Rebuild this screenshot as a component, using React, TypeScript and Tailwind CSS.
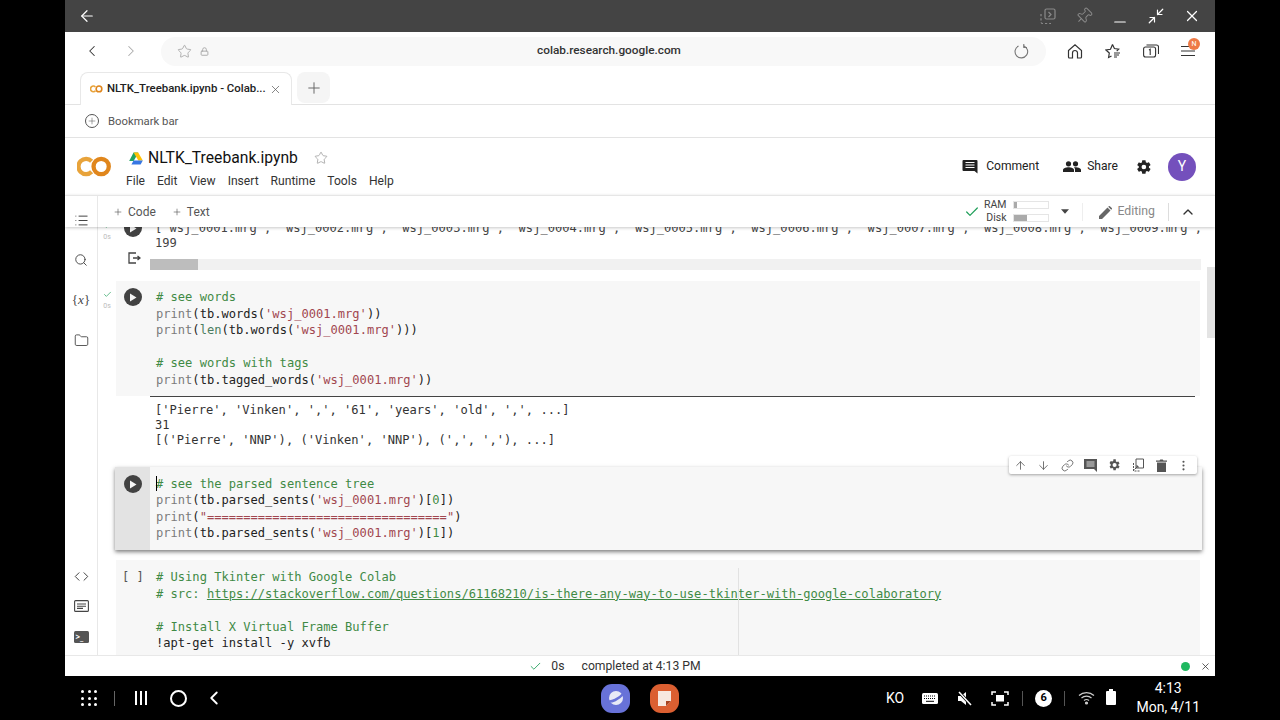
import { ArrowDown, ArrowLeft, ArrowUp, Check, ChevronLeft, ChevronRight, ChevronUp, Code, Folder, Link, List, Lock, Minimize2, Minus, MoreVertical, Pin, Plus, Search, Star, X } from "lucide-react";

const MONO = "font-['DejaVu_Sans_Mono',monospace]";

function PlayButton() {
  return (
    <div className="flex h-[18px] w-[18px] items-center justify-center rounded-full bg-[#424242]">
      <svg width="8" height="9" viewBox="0 0 8 9"><path d="M1 0.5 L7.5 4.5 L1 8.5 Z" fill="#f5f5f5" /></svg>
    </div>
  );
}

function Print({ children }: { children: React.ReactNode }) {
  return <div className="h-[16.5px] whitespace-pre"><span className="text-[#7b7b7b]">print</span>{children}</div>;
}

function Str({ children }: { children: React.ReactNode }) {
  return <span className="text-[#a1464f]">{children}</span>;
}

function Comment({ children }: { children: React.ReactNode }) {
  return <div className="h-[16.5px] whitespace-pre text-[#3f8a45]">{children}</div>;
}

function ColabLogo({ size = 36 }: { size?: number }) {
  return (
    <svg width={size} height={size * 0.6} viewBox="0 0 36 22" fill="none">
      <path d="M15 5.5 A8 8 0 1 0 15 16.5" stroke="#e8a33a" strokeWidth="4.5" />
      <circle cx="25" cy="11" r="8" stroke="#e0861c" strokeWidth="4.5" />
    </svg>
  );
}

function DriveLogo() {
  return (
    <svg width="14" height="13" viewBox="0 0 14 13">
      <path d="M4.6 0.5 H9.2 L7 5 4.6 9 2.4 9 0.2 9 Z" fill="#1fa463" />
      <path d="M4.6 0.5 H9.2 L13.8 8.5 H9.3 Z" fill="#ffc107" />
      <path d="M2.4 12.5 L4.6 8.5 H13.8 L11.6 12.5 Z" fill="#3777e3" />
    </svg>
  );
}

function BrowserChrome() {
  return (
    <>
      <div className="flex h-[32px] items-center justify-between bg-[#444444] pl-[13px] pr-[14px] text-white">
        <ArrowLeft size={18} strokeWidth={1.6} />
        <div className="flex items-center gap-[18px]">
          <svg width="18" height="18" viewBox="0 0 18 18" fill="none" stroke="#8a8a8a" strokeWidth="1.2">
            <rect x="6" y="2" width="10" height="10" rx="1.5" />
            <path d="M2 7v8a1.5 1.5 0 0 0 1.5 1.5H12" strokeDasharray="2.2 2" />
            <path d="M9.5 5l2.5 2.5L9.5 10" />
          </svg>
          <Pin size={18} strokeWidth={1.3} className="rotate-45 text-[#8a8a8a]" />
          <Minus size={18} strokeWidth={1.6} className="translate-y-[6px]" />
          <Minimize2 size={18} strokeWidth={1.6} />
          <X size={18} strokeWidth={1.6} />
        </div>
      </div>
      <div className="flex h-[38px] items-center bg-white pl-[18px] pr-[20px]">
        <ChevronLeft size={18} strokeWidth={1.4} className="text-[#333]" />
        <ChevronRight size={18} strokeWidth={1.4} className="ml-[21px] text-[#aaa]" />
        <div className="ml-[21px] flex h-[29px] w-[885px] items-center rounded-full bg-[#f8f8f8] px-[16px]">
          <Star size={15} strokeWidth={1.2} className="text-[#999]" />
          <Lock size={9} strokeWidth={2.5} className="ml-[8px] text-[#aaa]" />
          <span className="flex-1 pr-[5px] text-center font-['Roboto',sans-serif] text-[11.8px] font-medium text-[#333]">colab.research.google.com</span>
          <svg className="mr-[1px]" width="15" height="15" viewBox="0 0 15 15" fill="none" stroke="#777" strokeWidth="1.1"><path d="M9.500 1.700A6.300 6.300 0 1 1 4.500 2" /><path d="M9.800 0v3.500H13" /></svg>
        </div>
        <div className="ml-auto flex items-center gap-[22px] text-[#333]">
          <svg width="16" height="16" viewBox="0 0 16 16" fill="none" stroke="#333" strokeWidth="1.2"><path d="M1.5 7.5 8 1.8l6.5 5.7V14a1 1 0 0 1-1 1H10.5V10a2.5 2.5 0 0 0-5 0v5h-3a1 1 0 0 1-1-1Z" /></svg>
          <svg width="16" height="16" viewBox="0 0 16 16" fill="none" stroke="#333" strokeWidth="1.2"><path d="M7.500 1.500l1.900 4 4.300.6-2 2M6.500 13l-2.900 1.500.7-4.500-3.300-3 4.500-.7L7.500 1.500M9 10h6M9 12h5M9 14h3" /></svg>
          <svg width="16" height="14" viewBox="0 0 16 14" fill="none" stroke="#333" strokeWidth="1.1"><rect x="0.6" y="3" width="12" height="10" rx="2" /><path d="M3.5 1h10a2 2 0 0 1 2 2v7" /><path d="M6 6l1.2-.8V11" /></svg>
          <div className="relative">
            <svg width="14" height="12" viewBox="0 0 14 12" stroke="#333" strokeWidth="1.1"><path d="M0 1.5h14M0 6h14M0 10.5h14" /></svg>
            <div className="absolute -right-[5px] -top-[7px] flex h-[12px] w-[12px] items-center justify-center rounded-full bg-[#ee7a45] font-['Roboto',sans-serif] text-[7px] text-white">N</div>
          </div>
        </div>
      </div>
      <div className="flex h-[35px] items-end border-b border-[#e3e3e3] bg-white pl-[15px]">
        <div className="relative z-10 -mb-px flex h-[33px] w-[212px] items-center rounded-t-[8px] border border-b-0 border-[#e8e8e8] bg-white pl-[9px] pr-[9px]">
          <ColabLogo size={13} />
          <span className="ml-[4px] whitespace-nowrap font-['Roboto',sans-serif] text-[11.4px] font-medium text-[#222]">NLTK_Treebank.ipynb - Colab...</span>
          <X size={13} strokeWidth={1.3} className="ml-auto text-[#555]" />
        </div>
        <div className="mb-[1px] ml-[5px] flex h-[31px] w-[33px] items-center justify-center rounded-[8px] bg-[#f5f5f5]">
          <Plus size={18} strokeWidth={1.3} className="text-[#666]" />
        </div>
      </div>
      <div className="flex h-[33px] items-center gap-[9px] border-b border-[#e3e3e3] bg-white pl-[20px]">
        <div className="flex h-[14px] w-[14px] items-center justify-center rounded-full border border-[#555]">
          <Plus size={10} strokeWidth={1.3} className="text-[#555]" />
        </div>
        <span className="pt-[3px] font-['Roboto',sans-serif] text-[11.3px] text-[#555]">Bookmark bar</span>
      </div>
    </>
  );
}

function ColabHeader() {
  return (
    <div className="flex h-[57px] items-center bg-white pl-[12px] pr-[19px] font-['Roboto',sans-serif]">
      <ColabLogo size={35} />
      <div className="ml-[17px] mt-[4px]">
        <div className="flex items-center gap-[5px]">
          <DriveLogo />
          <span className="text-[15.7px] leading-[22px] text-[#111]">NLTK_Treebank.ipynb</span>
          <Star size={14} strokeWidth={1.3} className="ml-[11px] text-[#999]" />
        </div>
        <div className="mt-[3px] flex gap-[12px] text-[12.1px] leading-[18px] text-[#333]">
          <span className="-ml-[3px]">File</span><span>Edit</span><span>View</span><span>Insert</span><span>Runtime</span><span>Tools</span><span>Help</span>
        </div>
      </div>
      <div className="ml-auto flex items-center text-[12.1px] text-[#222]">
        <svg width="16" height="16" viewBox="0 0 16 16" fill="#222"><path d="M1.5 1h13a1 1 0 0 1 1 1v12.5L12.5 12h-11a1 1 0 0 1-1-1V2a1 1 0 0 1 1-1Z" /><path d="M3.5 3.5h9M3.5 6h9M3.5 8.5h9" stroke="#fff" strokeWidth="1" /></svg>
        <span className="ml-[8px]">Comment</span>
        <svg className="ml-[24px]" width="18" height="11" viewBox="0 0 18 11" fill="#222"><circle cx="5.5" cy="2.8" r="2.6" /><circle cx="12.5" cy="2.8" r="2.6" /><path d="M0 11V8.8C0 7 3.5 6.2 5.5 6.2S11 7 11 8.8V11Z" /><path d="M12 11V8.5c0-.9-.4-1.6-1.1-2.2.5-.1 1.1-.1 1.6-.1 2 0 5.500.8 5.500 2.600V11Z" /></svg>
        <span className="ml-[6px]">Share</span>
        <svg className="ml-[18px]" width="16" height="16" viewBox="0 0 24 24" fill="#222"><path d="M19.4 13c.04-.32.06-.65.06-1s-.02-.68-.07-1l2.160-1.630c.19-.15.24-.42.12-.64l-2.050-3.550c-.12-.22-.39-.3-.61-.22l-2.550 1.020c-.53-.4-1.100-.74-1.730-1l-.38-2.710A.5.5 0 0 0 13.850 2h-4.100a.5.5 0 0 0-.5.42l-.38 2.710c-.63.26-1.200.6-1.730 1L4.590 5.110a.5.5 0 0 0-.61.22L1.930 8.880c-.13.22-.07.49.12.64L4.210 11c-.05.32-.09.66-.09 1s.02.68.07 1l-2.160 1.630a.5.5 0 0 0-.12.64l2.050 3.550c.12.22.39.3.61.22l2.550-1.020c.53.4 1.100.74 1.730 1l.38 2.710c.05.24.26.42.5.42h4.100c.24 0 .45-.18.49-.42l.38-2.710c.63-.26 1.200-.6 1.730-1l2.550 1.020c.23.09.49 0 .61-.22l2.050-3.550a.5.5 0 0 0-.12-.64ZM11.800 15.500a3.500 3.500 0 1 1 0-7 3.500 3.500 0 0 1 0 7Z" /></svg>
        <div className="ml-[16px] flex h-[28px] w-[28px] items-center justify-center rounded-full bg-[#7450bc] text-[14px] text-white">Y</div>
      </div>
    </div>
  );
}

function ColabToolbar() {
  return (
    <div className="relative z-10 flex h-[32px] items-center border-t border-[#e6e6e6] bg-white font-['Roboto',sans-serif] shadow-[0_1px_3px_rgba(0,0,0,0.22)]">
      <div className="h-full w-[33px] border-r border-[#e8e8e8]" />
      <div className="ml-[15px] flex items-center gap-[5px] text-[12px] text-[#555]"><Plus size={10} strokeWidth={1.5} /><span>Code</span></div>
      <div className="ml-[16px] flex items-center gap-[5px] text-[12px] text-[#555]"><Plus size={10} strokeWidth={1.5} /><span>Text</span></div>
      <div className="ml-auto flex items-center pr-[19px]">
        <Check size={16} strokeWidth={1.8} className="text-[#1e9e58]" />
        <div className="ml-[4px] mr-[7px] text-right text-[10.5px] leading-[12.5px] text-[#444]"><div>RAM</div><div>Disk</div></div>
        <div className="flex flex-col gap-[5px]">
          <div className="h-[8px] w-[36px] border border-[#e5e5e5]"><div className="h-full w-[3px] bg-[#aaa]" /></div>
          <div className="h-[8px] w-[36px] border border-[#e5e5e5]"><div className="h-full w-[13px] bg-[#aaa]" /></div>
        </div>
        <svg className="ml-[12px]" width="8" height="5" viewBox="0 0 9 5" fill="#444"><path d="M0 0h9L4.500 5Z" /></svg>
        <div className="ml-[13px] h-[18px] border-l border-[#eee]" />
        <svg className="ml-[16px]" width="14" height="14" viewBox="0 0 14 14" fill="#666"><path d="M0 11v3h3l8.500-8.500-3-3ZM12.800 4.200a.8.8 0 0 0 0-1.100l-1.900-1.900a.8.8 0 0 0-1.100 0L9.200 1.800l3 3Z" /></svg>
        <span className="ml-[4px] text-[12.3px] text-[#888]">Editing</span>
        <div className="ml-[13px] h-[18px] border-l border-[#ddd]" />
        <ChevronUp size={16} strokeWidth={2} className="ml-[11px] text-[#333]" />
      </div>
    </div>
  );
}

function Sidebar() {
  return (
    <div className="flex w-[33px] shrink-0 flex-col items-center border-r border-[#e8e8e8] bg-white text-[#444]">
      <List size={15} strokeWidth={1.6} className="relative z-20 mt-[-14px]" />
      <Search size={14} strokeWidth={1.6} className="mt-[25px]" />
      <span className="mt-[25px] h-[16px] font-['Liberation_Serif',serif] text-[13px] leading-[16px]">{"{"}<i>x</i>{"}"}</span>
      <Folder size={15} strokeWidth={1.4} className="mt-[25px]" />
      <Code size={15} strokeWidth={1.6} className="mt-auto" />
      <svg className="mt-[16px]" width="15" height="12" viewBox="0 0 15 12" fill="none" stroke="#444" strokeWidth="1.100"><rect x="0.600" y="0.600" width="13.800" height="10.800" rx="1" /><path d="M3 4h9M3 6.200h9M3 8.400h6" /></svg>
      <div className="mb-[12px] mt-[19px] flex h-[12px] w-[15px] items-center rounded-[1.500px] bg-[#555] pl-[2px] text-[8px] font-bold leading-none text-white">&gt;_</div>
    </div>
  );
}

function CellToolbar() {
  return (
    <div className="absolute -top-[11px] right-[5px] flex h-[18px] w-[188px] items-center justify-between rounded-[2px] bg-white pl-[5px] pr-[7px] text-[#555] shadow-[0_1px_3px_rgba(0,0,0,0.35)]">
      <ArrowUp size={13} strokeWidth={1.5} />
      <ArrowDown size={13} strokeWidth={1.5} />
      <Link size={13} strokeWidth={1.5} />
      <svg width="13" height="13" viewBox="0 0 13 13" fill="#555"><path d="M0 0h13v13l-3-3H0Z" /><path d="M2.500 3h8M2.500 5h8M2.500 7h8" stroke="#fff" strokeWidth="0.800" /></svg>
      <svg width="14" height="14" viewBox="0 0 24 24" fill="#555"><path d="M19.400 13a7.500 7.500 0 0 0 0-2l2.100-1.600-2-3.500-2.500 1a7.500 7.500 0 0 0-1.700-1L15 2.100h-4L10.600 5a7.500 7.500 0 0 0-1.700 1l-2.500-1-2 3.500L6.500 11a7.500 7.500 0 0 0 0 2l-2.100 1.600 2 3.500 2.500-1c.5.4 1.100.7 1.700 1l.4 2.800h4l.4-2.800c.6-.3 1.200-.6 1.700-1l2.500 1 2-3.500ZM13 15.500a3.500 3.500 0 1 1 0-7 3.500 3.500 0 0 1 0 7Z" /></svg>
      <svg width="14" height="14" viewBox="0 0 14 14" fill="none" stroke="#555" strokeWidth="1"><path d="M5 1h7.500v9H5Z" /><path d="M2.500 5v8H9" strokeDasharray="2 1" /><path d="M3.500 11.500 7 8M5 8h2v2" /></svg>
      <svg width="11" height="13" viewBox="0 0 11 13" fill="#555"><path d="M1 3.500h9V13H1ZM0 1.500h3.500L4.300.500h2.400l.8 1H11v1.200H0Z" /></svg>
      <MoreVertical size={13} strokeWidth={2} />
    </div>
  );
}

function RunStatus({ className }: { className: string }) {
  return (
    <div className={`absolute left-[1px] flex w-[16px] flex-col items-center gap-[3px] font-['Roboto',sans-serif] text-[7px] leading-[8px] text-[#bbb] ${className}`}>
      <Check size={9} strokeWidth={1.800} className="text-[#1e9e58]" />
      <span>0s</span>
    </div>
  );
}

function Notebook() {
  return (
    <div className={`relative flex-1 overflow-hidden bg-white ${MONO} text-[12.08px] leading-[16.5px] text-[#222]`}>
      <RunStatus className="-top-[6px]" />
      {/* first output, scrolled under the toolbar */}
      <div className="relative -mt-[7px] h-[32px] overflow-hidden pl-[25px]">
        <div className="absolute -top-[1px] left-[26px]"><PlayButton /></div>
        <div className="ml-[32px] whitespace-pre text-[#444]">
          <div className="h-[15px]">{"['wsj_0001.mrg', 'wsj_0002.mrg', 'wsj_0003.mrg', 'wsj_0004.mrg', 'wsj_0005.mrg', 'wsj_0006.mrg', 'wsj_0007.mrg', 'wsj_0008.mrg', 'wsj_0009.mrg',"}</div>
          <div className="h-[15px]">199</div>
        </div>
      </div>
      <div className="flex h-[16px] items-start pl-[30px] pr-[14px]">
        <svg width="13" height="12" viewBox="0 0 13 12" fill="none" stroke="#444" strokeWidth="1.300"><path d="M8 1H1v10h7M5 6h6.500M9.500 4l2.500 2-2.500 2" /></svg>
        <div className="ml-[9px] mt-[7px] h-[11px] flex-1 bg-[#f1f1f1]"><div className="h-full w-[48px] bg-[#bdbdbd]" /></div>
      </div>

      {/* see words */}
      <div className="relative ml-[18px] mr-[15px] mt-[13px] h-[115px] bg-[#f7f7f7] pl-[40px] pt-[8px]">
        <div className="absolute left-[8px] top-[7px]"><PlayButton /></div>
        <Comment># see words</Comment>
        <Print>(tb.words(<Str>'wsj_0001.mrg'</Str>))</Print>
        <Print>(<span className="text-[#4b7d60]">len</span>(tb.words(<Str>'wsj_0001.mrg'</Str>)))</Print>
        <div className="h-[16.5px]" />
        <Comment># see words with tags</Comment>
        <Print>(tb.tagged_words(<Str>'wsj_0001.mrg'</Str>))</Print>
      </div>
      <RunStatus className="top-[63px]" />
      <div className="ml-[52px] mr-[20px] border-t border-[#444] pl-[5px] pt-[5px] text-[#333]">
        <div className="h-[15px] whitespace-pre">{"['Pierre', 'Vinken', ',', '61', 'years', 'old', ',', ...]"}</div>
        <div className="h-[15px]">31</div>
        <div className="h-[15px] whitespace-pre">{"[('Pierre', 'NNP'), ('Vinken', 'NNP'), (',', ','), ...]"}</div>
      </div>

      {/* selected cell */}
      <div className="relative ml-[17px] mr-[13px] mt-[20px] flex h-[83px] bg-[#f7f7f7] shadow-[0_2px_4px_rgba(0,0,0,0.5)]">
        <CellToolbar />
        <div className="w-[35px] shrink-0 bg-[#e3e3e3] pl-[9px] pt-[8px]"><PlayButton /></div>
        <div className="relative pl-[6px] pt-[8.5px]">
          <div className="absolute left-[6px] top-[9px] h-[15px] w-px bg-black" />
          <Comment># see the parsed sentence tree</Comment>
          <Print>(tb.parsed_sents(<Str>'wsj_0001.mrg'</Str>)[<span className="text-[#3f8a45]">0</span>])</Print>
          <Print>(<Str>"================================="</Str>)</Print>
          <Print>(tb.parsed_sents(<Str>'wsj_0001.mrg'</Str>)[<span className="text-[#3f8a45]">1</span>])</Print>
        </div>
      </div>

      {/* tkinter cell */}
      <div className="relative ml-[18px] mr-[15px] mt-[10px] h-[110px] bg-[#f7f7f7] pl-[40px] pt-[9px]">
        <div className="absolute left-[6px] top-[9px] text-[#555]">[ ]</div>
        <div className="absolute bottom-0 left-[622px] top-[8px] w-px bg-[#e2e2e2]" />
        <Comment># Using Tkinter with Google Colab</Comment>
        <Comment># src: <span className="underline">https://stackoverflow.com/questions/61168210/is-there-any-way-to-use-tkinter-with-google-colaboratory</span></Comment>
        <div className="h-[16.5px]" />
        <Comment># Install X Virtual Frame Buffer</Comment>
        <div className="h-[16.5px]">!apt-get install -y xvfb</div>
      </div>

      <div className="absolute right-0 top-[40px] h-[71px] w-[8px] bg-[#e4e4e4]" />
    </div>
  );
}

function StatusBar() {
  return (
    <div className="relative flex h-[21px] items-center justify-center border-t border-[#e8e8e8] bg-white pr-[50px] font-['Roboto',sans-serif] text-[12.2px] text-[#333]">
      <Check size={13} strokeWidth={1.600} className="text-[#1e9e58]" />
      <span className="ml-[9px]">0s</span>
      <span className="ml-[17px]">completed at 4:13 PM</span>
      <div className="absolute right-[25px] h-[9px] w-[9px] rounded-full bg-[#1fb860]" />
      <X size={11} strokeWidth={1.700} className="absolute right-[4px] text-[#333]" />
    </div>
  );
}

function Taskbar() {
  return (
    <div className="flex h-[44px] items-center bg-black pl-[81px] pr-[80px] font-['Roboto',sans-serif] text-white">
      <div className="grid grid-cols-3 gap-[3.500px]">
        {[0, 1, 2, 3, 4, 5, 6, 7, 8].map((i) => <div key={i} className="h-[3px] w-[3px] rounded-full bg-white" />)}
      </div>
      <div className="ml-[17px] h-[15px] w-px bg-[#666]" />
      <div className="ml-[20px] flex gap-[3px]">
        <div className="h-[14px] w-[2px] bg-white" /><div className="h-[14px] w-[2px] bg-white" /><div className="h-[14px] w-[2px] bg-white" />
      </div>
      <div className="ml-[23px] h-[17px] w-[17px] rounded-full border-2 border-white" />
      <ChevronLeft size={22} strokeWidth={2} className="ml-[16px]" />
      <div className="ml-[376px] flex h-[29px] w-[29px] items-center justify-center rounded-[11px] bg-[#6872d8]">
        <svg width="19" height="19" viewBox="0 0 19 19"><circle cx="10" cy="9" r="7" fill="#e8eaf6" /><path d="M1 12c4 2 12-2 17-8" stroke="#6872d8" strokeWidth="2.500" fill="none" /></svg>
      </div>
      <div className="ml-[20px] flex h-[29px] w-[29px] items-center justify-center rounded-[11px] bg-[#db5f31]">
        <svg width="15" height="17" viewBox="0 0 15 17"><path d="M1 1h13v10l-5 5H1Z" fill="#f7e8df" /><path d="M9 16v-5h5Z" fill="#a8431f" /></svg>
      </div>
      <span className="ml-[207px] text-[14px]">KO</span>
      <svg className="ml-[18px]" width="16" height="11" viewBox="0 0 16 11"><rect width="16" height="11" rx="1.500" fill="#fff" /><path d="M2 3h12M2 5.500h12" stroke="#000" strokeWidth="1" strokeDasharray="1 1" /><path d="M4 8.300h8" stroke="#000" strokeWidth="1" /></svg>
      <svg className="ml-[19px]" width="16" height="15" viewBox="0 0 16 15"><path d="M1 5h3l5-4v13l-5-4H1Z" fill="#fff" /><path d="M2 1l12 13" stroke="#000" strokeWidth="3" /><path d="M2 1l12 13" stroke="#fff" strokeWidth="1.500" /></svg>
      <svg className="ml-[18px]" width="18" height="15" viewBox="0 0 18 15" fill="none" stroke="#fff" strokeWidth="1.500"><path d="M1 4V1h4M13 1h4v3M1 11v3h4M13 14h4v-3" /><rect x="5" y="4" width="8" height="6.500" fill="#fff" stroke="none" /></svg>
      <div className="ml-[13px] h-[15px] w-px bg-[#555]" />
      <div className="ml-[12px] flex h-[17px] w-[17px] items-center justify-center rounded-full bg-white text-[11px] font-bold text-black">6</div>
      <div className="ml-[12px] h-[15px] w-px bg-[#555]" />
      <svg className="ml-[13px]" width="18" height="14" viewBox="0 0 18 14" fill="none" stroke="#ccc" strokeWidth="1.200"><path d="M1 4.500a11 11 0 0 1 15 0M3.500 7a7.500 7.500 0 0 1 10 0M6 9.500a4 4 0 0 1 5 0" /><circle cx="8.500" cy="12" r="1" fill="#ccc" /></svg>
      <div className="relative ml-[10px] h-[14px] w-[10px] rounded-[1px] bg-white"><div className="absolute -top-[2px] left-[3px] h-[2px] w-[4px] bg-white" /></div>
      <div className="ml-auto text-center text-[14px] leading-[19px]"><div>4:13</div><div>Mon, 4/11</div></div>
    </div>
  );
}

export default function App() {
  return (
    <div className="flex h-[720px] w-[1280px] flex-col overflow-hidden bg-black">
      <div className="mx-[65px] flex h-[676px] flex-col bg-white">
        <BrowserChrome />
        <ColabHeader />
        <ColabToolbar />
        <div className="flex min-h-0 flex-1">
          <Sidebar />
          <Notebook />
        </div>
        <StatusBar />
      </div>
      <Taskbar />
    </div>
  );
}
